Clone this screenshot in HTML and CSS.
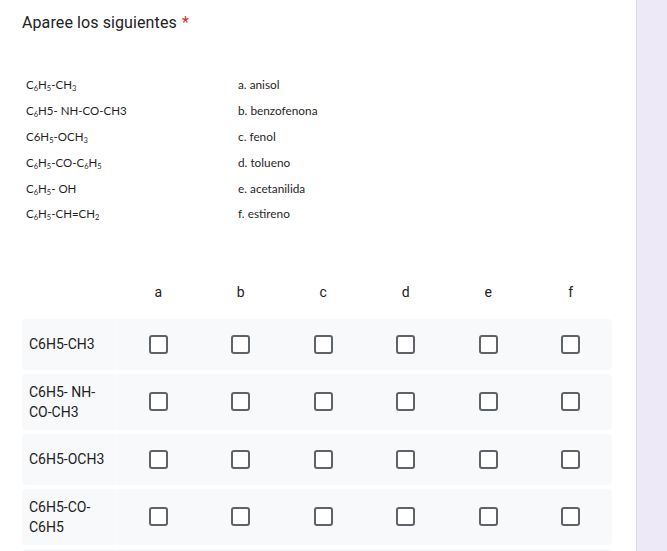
FILE: index.html
```html
<!DOCTYPE html>
<html>
<head>
    <meta charset="UTF-8">
    <title>Aparee los siguientes</title>
    <link rel="stylesheet" href="styles.css">
</head>
<body>
    <div class="page">
        <div class="card">
            <div class="question-title">Aparee los siguientes <span class="required">*</span></div>

            <div class="formula-list">
                <div class="formula">C<sub>6</sub>H<sub>5</sub>-CH<sub>3</sub></div>
                <div class="answer">a. anisol</div>
                <div class="formula">C<sub>6</sub>H5- NH-CO-CH3</div>
                <div class="answer">b. benzofenona</div>
                <div class="formula">C6H<sub>5</sub>-OCH<sub>3</sub></div>
                <div class="answer">c. fenol</div>
                <div class="formula">C<sub>6</sub>H<sub>5</sub>-CO-C<sub>6</sub>H<sub>5</sub></div>
                <div class="answer">d. tolueno</div>
                <div class="formula">C<sub>6</sub>H<sub>5</sub>- OH</div>
                <div class="answer">e. acetanilida</div>
                <div class="formula">C<sub>6</sub>H<sub>5</sub>-CH=CH<sub>2</sub></div>
                <div class="answer">f. estireno</div>
            </div>

            <div class="grid">
                <div class="grid-head">
                    <div></div>
                    <div class="col-label">a</div>
                    <div class="col-label">b</div>
                    <div class="col-label">c</div>
                    <div class="col-label">d</div>
                    <div class="col-label">e</div>
                    <div class="col-label">f</div>
                </div>

                <div class="grid-row">
                    <div class="row-label">C6H5-CH3</div>
                    <div class="cell"><span class="checkbox"></span></div>
                    <div class="cell"><span class="checkbox"></span></div>
                    <div class="cell"><span class="checkbox"></span></div>
                    <div class="cell"><span class="checkbox"></span></div>
                    <div class="cell"><span class="checkbox"></span></div>
                    <div class="cell"><span class="checkbox"></span></div>
                </div>
                <div class="grid-row">
                    <div class="row-label">C6H5- NH-CO-CH3</div>
                    <div class="cell"><span class="checkbox"></span></div>
                    <div class="cell"><span class="checkbox"></span></div>
                    <div class="cell"><span class="checkbox"></span></div>
                    <div class="cell"><span class="checkbox"></span></div>
                    <div class="cell"><span class="checkbox"></span></div>
                    <div class="cell"><span class="checkbox"></span></div>
                </div>
                <div class="grid-row">
                    <div class="row-label">C6H5-OCH3</div>
                    <div class="cell"><span class="checkbox"></span></div>
                    <div class="cell"><span class="checkbox"></span></div>
                    <div class="cell"><span class="checkbox"></span></div>
                    <div class="cell"><span class="checkbox"></span></div>
                    <div class="cell"><span class="checkbox"></span></div>
                    <div class="cell"><span class="checkbox"></span></div>
                </div>
                <div class="grid-row">
                    <div class="row-label">C6H5-CO-C6H5</div>
                    <div class="cell"><span class="checkbox"></span></div>
                    <div class="cell"><span class="checkbox"></span></div>
                    <div class="cell"><span class="checkbox"></span></div>
                    <div class="cell"><span class="checkbox"></span></div>
                    <div class="cell"><span class="checkbox"></span></div>
                    <div class="cell"><span class="checkbox"></span></div>
                </div>
                <div class="grid-row">
                    <div class="row-label">C6H5- OH</div>
                    <div class="cell"><span class="checkbox"></span></div>
                    <div class="cell"><span class="checkbox"></span></div>
                    <div class="cell"><span class="checkbox"></span></div>
                    <div class="cell"><span class="checkbox"></span></div>
                    <div class="cell"><span class="checkbox"></span></div>
                    <div class="cell"><span class="checkbox"></span></div>
                </div>
                <div class="grid-row">
                    <div class="row-label">C6H5-CH=CH2</div>
                    <div class="cell"><span class="checkbox"></span></div>
                    <div class="cell"><span class="checkbox"></span></div>
                    <div class="cell"><span class="checkbox"></span></div>
                    <div class="cell"><span class="checkbox"></span></div>
                    <div class="cell"><span class="checkbox"></span></div>
                    <div class="cell"><span class="checkbox"></span></div>
                </div>
            </div>
        </div>
        <div class="side"></div>
    </div>
</body>
</html>
```

FILE: styles.css
```css
html, body {
    margin: 0;
    height: 100%;
}

body {
    font-family: Roboto, "Liberation Sans", Arial, sans-serif;
    color: #202124;
    overflow: hidden;
}

.page {
    display: flex;
    min-height: 100%;
}

.card {
    width: 637px;
    flex-shrink: 0;
    box-sizing: border-box;
    padding: 11px 24px 40px 22px;
    background: #fff;
    border-right: 1px solid #dadce0;
}

.side {
    flex: 1;
    background: #ede9f7;
}

.question-title {
    font-size: 16px;
    line-height: 24px;
    letter-spacing: 0.1px;
}

.required {
    color: #d93025;
    margin-left: 1px;
}

.formula-list {
    display: grid;
    grid-template-columns: 212px auto;
    grid-auto-rows: 25.8px;
    align-items: center;
    margin-top: 37px;
    padding-left: 4px;
    font-family: Lato, "Open Sans", sans-serif;
    font-size: 11.5px;
    color: #1f1f1f;
}

.answer {
    font-size: 11.8px;
}

.formula-list sub {
    font-size: 7.5px;
    vertical-align: -2px;
    line-height: 0;
}

.grid {
    margin-top: 42px;
    display: flex;
    flex-direction: column;
    gap: 4px;
}

.grid-head,
.grid-row {
    display: grid;
    grid-template-columns: 95px repeat(6, 1fr);
}

.grid-head {
    height: 46px;
    align-items: center;
    font-size: 14px;
}

.col-label {
    text-align: center;
}

.grid-row {
    min-height: 51px;
    background: #f8f9fa;
    border-radius: 4px;
}

.row-label {
    box-sizing: border-box;
    padding: 8px 8px 8px 7px;
    font-size: 14px;
    line-height: 20px;
    border-right: 1px solid #fcfcfd;
    display: flex;
    align-items: center;
}

.cell {
    display: flex;
    align-items: center;
    justify-content: center;
}

.checkbox {
    width: 19px;
    height: 19px;
    box-sizing: border-box;
    border: 2px solid #5f6368;
    border-radius: 3px;
    background: #fff;
}
```
